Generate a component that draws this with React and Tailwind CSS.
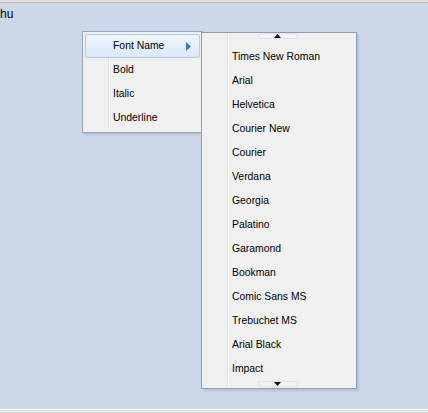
import React from 'react';

const fonts = [
    'Times New Roman', 'Arial', 'Helvetica', 'Courier New', 'Courier', 'Verdana', 'Georgia',
    'Palatino', 'Garamond', 'Bookman', 'Comic Sans MS', 'Trebuchet MS', 'Arial Black', 'Impact',
];

const ScrollButton = ({ down }) => (
    <div className={`flex justify-center pr-[3px] ${down ? 'h-[7px] items-start' : 'h-[12px] items-start'}`}>
        <div className={`w-[40px] h-[6px] border border-[#dde1e6] bg-[#f3f3f3] flex items-center justify-center ${down ? 'rounded-b-[4px]' : 'rounded-t-[4px]'}`}>
            <svg width="7" height="4" viewBox="0 0 7 4">
                {down ? <path d="M0 0 H7 L3.5 4 Z" fill="#111" /> : <path d="M0 4 H7 L3.5 0 Z" fill="#111" />}
            </svg>
        </div>
    </div>
);

const App = () => {
    return (
        <div className="relative w-[428px] h-[413px] bg-[#cbd8e9] overflow-hidden text-[10.4px] text-black" style={{ fontFamily: '"Liberation Sans", Arial, sans-serif' }}>
            {/* top strip */}
            <div className="h-[2px] bg-[#d9e1ec]" />
            <div className="h-[1px] bg-[#f2a48c]" />
            <div className="pt-[4px] pl-0 text-[12px] leading-[14px]">hu</div>

            {/* bottom strip */}
            <div className="absolute left-0 right-0 bottom-0 h-[4px] border-t border-white bg-[#dfe3e8]" />

            {/* main menu */}
            <div className="absolute left-[82px] top-[31px] w-[121px] bg-[#f0f0f0] border border-[#97a5ba] shadow-[2px_2px_2px_rgba(0,0,0,0.1)] p-[2px]">
                <div className="absolute left-[25px] top-[2px] bottom-[2px] w-[2px] border-l border-[#e2e3e3] bg-[#fff]/70" />
                <div className="relative flex flex-col">
                    <div className="h-[24px] flex items-center rounded-[2px] border border-[#b4cbea] bg-gradient-to-b from-[#f0f5fd] to-[#dce8f9]">
                        <span className="pl-[27px]">Font Name</span>
                        <svg className="ml-auto mr-[8px]" width="5" height="9" viewBox="0 0 5 9">
                            <path d="M0 0 L5 4.5 L0 9 Z" fill="#3a78c8" />
                        </svg>
                    </div>
                    {['Bold', 'Italic', 'Underline'].map((t) => (
                        <div key={t} className="h-[24px] flex items-center pl-[28px]">{t}</div>
                    ))}
                </div>
            </div>

            {/* submenu */}
            <div className="absolute left-[201px] top-[32px] w-[156px] bg-[#f0f0f0] border border-[#8e9eb6] shadow-[2px_2px_2px_rgba(0,0,0,0.1)]">
                <div className="absolute left-[25px] top-0 bottom-0 w-[2px] border-l border-[#e2e3e3] bg-[#fff]/70" />
                <div className="relative">
                    <ScrollButton />
                    <div className="flex flex-col">
                        {fonts.map((f) => (
                            <div key={f} className="h-[24px] flex items-center pl-[30px]">{f}</div>
                        ))}
                    </div>
                    <ScrollButton down />
                </div>
            </div>
        </div>
    );
};

export default App;
